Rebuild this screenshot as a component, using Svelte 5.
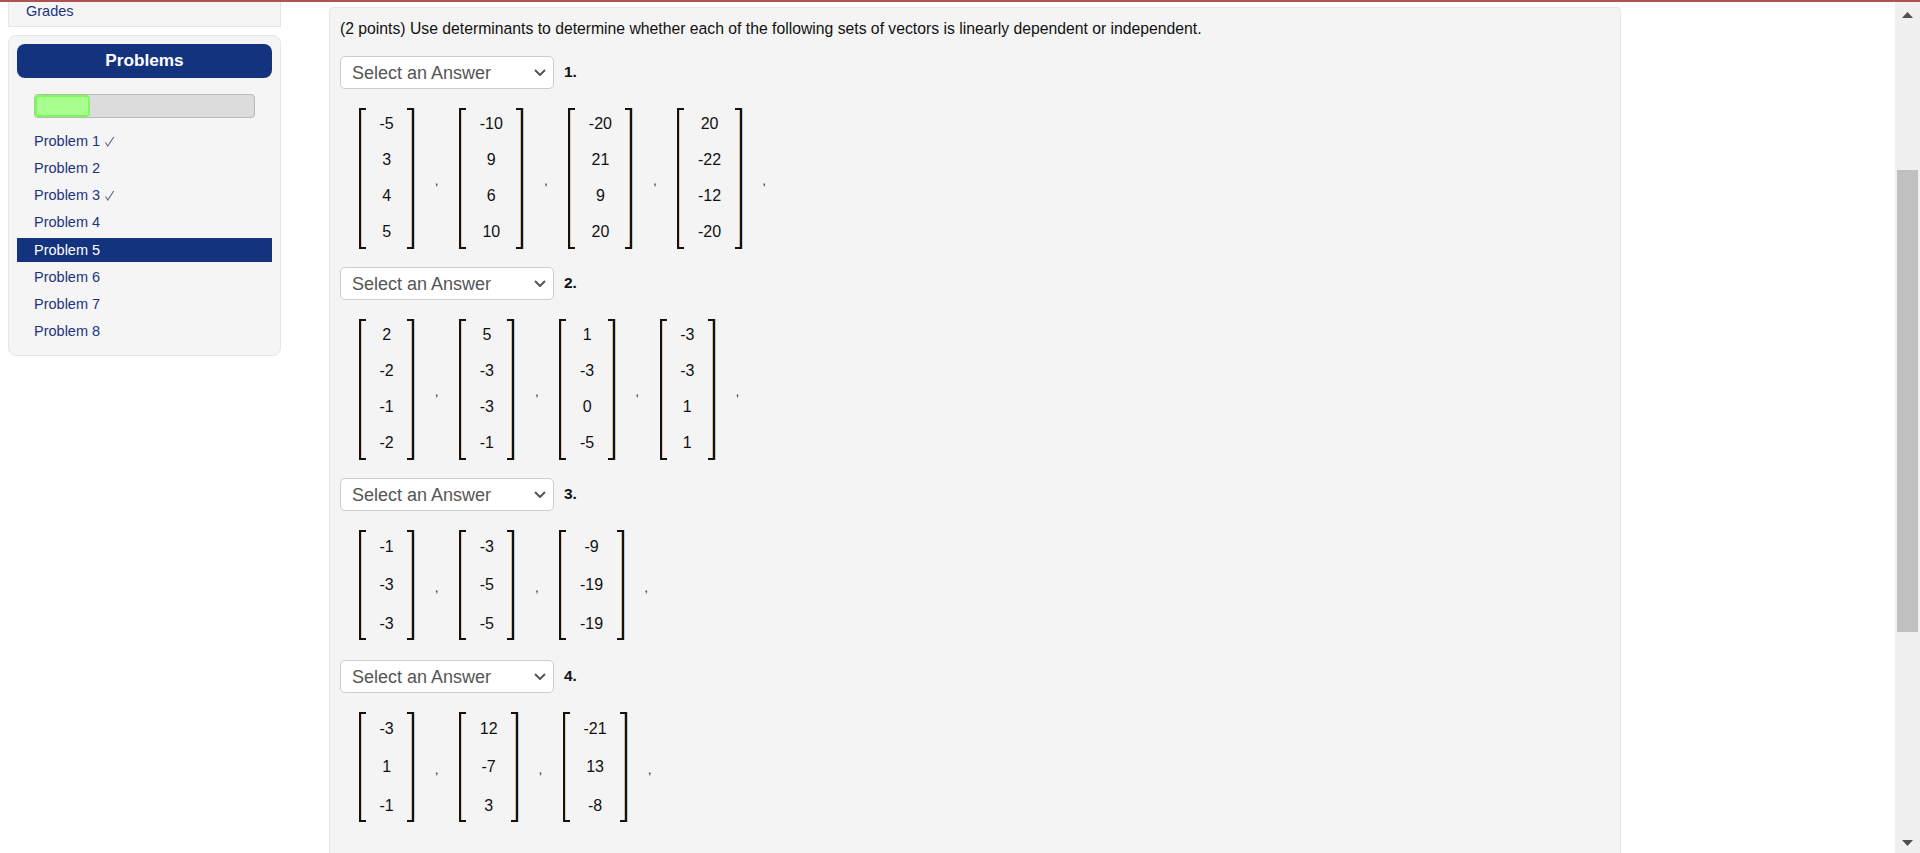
<script>
  const problems = [
    { n: 1, done: true }, { n: 2 }, { n: 3, done: true }, { n: 4 },
    { n: 5, active: true }, { n: 6 }, { n: 7 }, { n: 8 }
  ];
  const sets = [
    { tall: true, vectors: [[-5, 3, 4, 5], [-10, 9, 6, 10], [-20, 21, 9, 20], [20, -22, -12, -20]] },
    { tall: true, vectors: [[2, -2, -1, -2], [5, -3, -3, -1], [1, -3, 0, -5], [-3, -3, 1, 1]] },
    { tall: false, vectors: [[-1, -3, -3], [-3, -5, -5], [-9, -19, -19]] },
    { tall: false, vectors: [[-3, 1, -1], [12, -7, 3], [-21, 13, -8]] }
  ];
</script>

<div class="page">
  <div class="topline"></div>
  <div class="body">
    <aside class="side">
      <div class="grades"><a href="#grades">Grades</a></div>
      <nav class="problems">
        <h2>Problems</h2>
        <div class="progress"><div class="fill"></div></div>
        <ul>
          {#each problems as p}
            <li class:active={p.active}>
              <a href="#p{p.n}">Problem {p.n}</a>
              {#if p.done}
                <svg class="check" width="11" height="11" viewBox="0 0 11 11"><path d="M1.500 6.500 3.800 10 9.800 1" /></svg>
              {/if}
            </li>
          {/each}
        </ul>
      </nav>
    </aside>

    <main class="panel">
      <p class="intro">(2 points) Use determinants to determine whether each of the following sets of vectors is linearly dependent or independent.</p>
      {#each sets as s, i}
        <div class="answer">
          <div class="picker">
            <select aria-label="Answer {i + 1}">
              <option>Select an Answer</option>
              <option>Linearly dependent</option>
              <option>Linearly independent</option>
            </select>
            <svg class="chevron" width="12" height="7" viewBox="0 0 12 7"><path d="M1 1l5 5 5-5" /></svg>
          </div>
          <b>{i + 1}.</b>
        </div>
        <div class="vectors" class:tall={s.tall}>
          {#each s.vectors as v}
            <div class="matrix">
              {#each v as x}<span>{x}</span>{/each}
            </div>
            <span class="comma">,</span>
          {/each}
        </div>
      {/each}
    </main>

    <div class="scrollbar">
      <svg class="arrow up" width="11" height="6" viewBox="0 0 11 6"><path d="M5.500 0 11 6H0z" /></svg>
      <div class="thumb"></div>
      <svg class="arrow down" width="11" height="6" viewBox="0 0 11 6"><path d="M0 0h11L5.500 6z" /></svg>
    </div>
  </div>
</div>

<style>
  :global(body) {
    margin: 0;
    background: #fff;
  }
  .page {
    height: 853px;
    overflow: hidden;
    display: flex;
    flex-direction: column;
    font-family: "Liberation Sans", Arial, sans-serif;
    color: #111;
  }
  .topline {
    height: 2px;
    flex: none;
    background: #b05252;
  }
  .body {
    flex: 1;
    min-height: 0;
    display: flex;
  }
  a {
    color: #1c3480;
    text-decoration: none;
  }
  .side {
    flex: none;
    width: 273px;
    margin-left: 8px;
    display: flex;
    flex-direction: column;
    gap: 8px;
    font-size: 14.5px;
  }
  .grades {
    height: 24px;
    background: #f5f5f5;
    border: 1px solid #e6e6e6;
    border-top: 0;
    padding-left: 17px;
    line-height: 18px;
  }
  .problems {
    height: 321px;
    box-sizing: border-box;
    background: #f5f5f5;
    border: 1px solid #e6e6e6;
    border-radius: 8px;
    padding: 8px;
  }
  h2 {
    margin: 0;
    height: 34px;
    line-height: 33px;
    background: #14337f;
    color: #fff;
    border-radius: 8px;
    text-align: center;
    font-size: 17.2px;
    font-weight: bold;
  }
  .progress {
    height: 24px;
    box-sizing: border-box;
    margin: 16px 17px 11px;
    background: #dcdcdc;
    border: 1px solid #b9b9b9;
    border-radius: 4px;
    overflow: hidden;
  }
  .fill {
    width: 55px;
    height: 22px;
    box-sizing: border-box;
    background: #a6ff8f;
    border: 2px solid #77ff55;
    border-radius: 4px;
  }
  ul {
    list-style: none;
    margin: 0;
    padding: 0;
    display: flex;
    flex-direction: column;
    gap: 3px;
  }
  li {
    display: flex;
    align-items: center;
    gap: 4px;
    height: 24px;
    line-height: 24px;
    padding-left: 17px;
  }
  li.active {
    margin-top: 1px;
    background: #14337f;
  }
  li.active a {
    color: #fff;
  }
  .check {
    display: block;
    fill: none;
    stroke: #56648e;
    stroke-width: 1.1;
  }
  .panel {
    flex: none;
    width: 1292px;
    height: 1000px;
    box-sizing: border-box;
    margin: 5px 0 0 48px;
    padding: 0 10px;
    background: #f4f4f4;
    border: 1px solid #e6e6e6;
    border-radius: 4px;
    font-size: 15.74px;
  }
  .intro {
    margin: 0;
    height: 48px;
    line-height: 41px;
    white-space: nowrap;
  }
  .answer {
    display: flex;
    align-items: center;
    gap: 10px;
    height: 33px;
  }
  .picker {
    position: relative;
    width: 214px;
    height: 33px;
  }
  select {
    display: block;
    width: 100%;
    height: 100%;
    box-sizing: border-box;
    padding: 0 24px 0 11px;
    appearance: none;
    background: #fff;
    border: 1px solid #ccc;
    border-radius: 5px;
    color: #555;
    font-family: inherit;
    font-size: 18px;
  }
  .chevron {
    position: absolute;
    right: 8px;
    top: 13px;
    fill: none;
    stroke: #555;
    stroke-width: 2;
    pointer-events: none;
  }
  b {
    font-size: 15.5px;
    padding-bottom: 2px;
  }
  .vectors {
    display: flex;
    align-items: center;
    margin: 19px 0 20px 19px;
    height: 110px;
  }
  .vectors.tall {
    height: 141px;
    margin-bottom: 18px;
  }
  .matrix {
    position: relative;
    display: grid;
    justify-items: center;
    align-content: start;
    box-sizing: border-box;
    height: 100%;
    padding: 0 20.5px;
    font-size: 16px;
    grid-auto-rows: 33px;
    row-gap: 5.25px;
    line-height: 33px;
  }
  .tall .matrix {
    grid-auto-rows: 31px;
    row-gap: 5px;
    line-height: 31px;
  }
  .matrix::before,
  .matrix::after {
    content: "";
    position: absolute;
    top: 0;
    bottom: 0;
    width: 5px;
    border: 2px solid #14110e;
  }
  .matrix::before {
    left: 0;
    border-right: 0;
    box-shadow: inset 1px 0 0 rgba(190, 125, 40, 0.35);
  }
  .matrix::after {
    right: 0;
    border-left: 0;
    box-shadow: 1px 0 0 rgba(90, 170, 235, 0.5), inset -1px 0 0 rgba(200, 130, 30, 0.5);
  }
  .comma {
    width: 45px;
    text-align: center;
    font-size: 12px;
    line-height: 12px;
    padding-top: 5px;
  }
  .scrollbar {
    flex: none;
    width: 25px;
    margin-left: auto;
    background: #f0f0f0;
    display: flex;
    flex-direction: column;
    align-items: center;
  }
  .arrow {
    display: block;
    flex: none;
    fill: #505050;
  }
  .arrow.up {
    margin-top: 10px;
  }
  .thumb {
    flex: none;
    width: 21px;
    height: 462px;
    margin-top: 152px;
    background: #c0c0c0;
  }
  .arrow.down {
    margin-top: auto;
    margin-bottom: 7px;
  }
</style>
